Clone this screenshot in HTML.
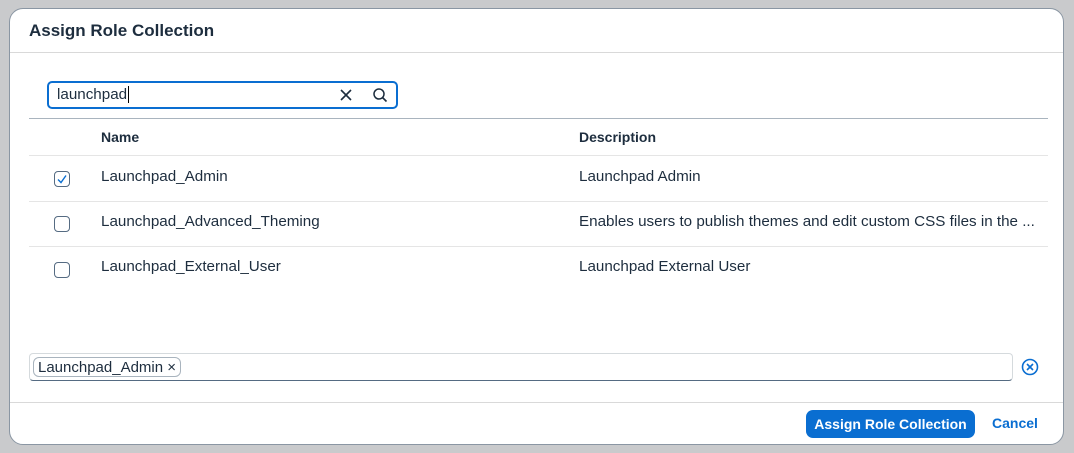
<!DOCTYPE html>
<html><head><style>
body{margin:0;width:1074px;height:453px;background:#c9cacc;font-family:"Liberation Sans",sans-serif;color:#1d2d3e;position:relative;overflow:hidden}
.dlg{position:absolute;left:9px;top:8px;width:1055px;height:437px;background:#fff;border-radius:14px;border:1px solid #8a96a3;box-sizing:border-box;overflow:hidden}
.abs{position:absolute}
.t{font-size:15.2px}
.b{font-size:14px;font-weight:bold}
.cb{position:absolute;left:44px;width:16px;height:16px;border:1px solid #556b82;border-radius:4px;box-sizing:border-box}
.line{position:absolute;left:19px;width:1019px;height:1px;background:#e5e5e5}
</style></head><body>
<div class="dlg">
<div class="abs" style="left:19px;top:12px;font-size:17px;font-weight:bold">Assign Role Collection</div>
<div class="abs" style="left:0;top:43px;width:100%;height:1px;background:#d9d9d9"></div>
<div class="abs" style="left:37px;top:72px;width:351px;height:28px;border:2px solid #0a6ed1;border-radius:5px;box-sizing:border-box"></div>
<div class="abs t" style="left:47px;top:77px">launchpad<span style="border-left:1px solid #000;margin-left:1px"></span></div>
<svg class="abs" style="left:329px;top:79px" width="14" height="14"><path d="M2 2L12 12M12 2L2 12" stroke="#1d2d3e" stroke-width="1.6"/></svg>
<svg class="abs" style="left:362px;top:78px" width="16" height="16"><circle cx="7" cy="7" r="5" fill="none" stroke="#1d2d3e" stroke-width="1.5"/><path d="M10.5 10.5L14.5 14.5" stroke="#1d2d3e" stroke-width="1.6"/></svg>
<div class="abs" style="left:19px;top:109px;width:1019px;height:1px;background:#a9b4be"></div>
<div class="abs b" style="left:91px;top:120px">Name</div>
<div class="abs b" style="left:569px;top:120px">Description</div>
<div class="line" style="top:146px"></div>
<div class="cb" style="top:162px"><svg width="14" height="14" style="position:absolute;left:0;top:0"><path d="M3 7.5L6 10.5L11 3.5" fill="none" stroke="#0a6ed1" stroke-width="1.4"/></svg></div>
<div class="abs t" style="left:91px;top:159px">Launchpad_Admin</div>
<div class="abs t" style="left:569px;top:159px">Launchpad Admin</div>
<div class="line" style="top:192px"></div>
<div class="cb" style="top:207px"></div>
<div class="abs t" style="left:91px;top:204px">Launchpad_Advanced_Theming</div>
<div class="abs t" style="left:569px;top:204px">Enables users to publish themes and edit custom CSS files in the ...</div>
<div class="line" style="top:237px"></div>
<div class="cb" style="top:253px"></div>
<div class="abs t" style="left:91px;top:249px">Launchpad_External_User</div>
<div class="abs t" style="left:569px;top:249px">Launchpad External User</div>
<div class="abs" style="left:19px;top:344px;width:984px;height:28px;border:1px solid #d5dadd;border-bottom:1px solid #556b82;border-radius:4px;box-sizing:border-box"></div>
<div class="abs" style="left:23px;top:348px;height:20px;border:1px solid #a9b4be;border-radius:6px;padding:0 4px;font-size:15px;line-height:19px;box-sizing:border-box;background:#fff">Launchpad_Admin ×</div>
<svg class="abs" style="left:1011px;top:349px" width="18" height="18"><circle cx="9" cy="9" r="7.5" fill="none" stroke="#0a6ed1" stroke-width="1.6"/><path d="M6 6L12 12M12 6L6 12" stroke="#0a6ed1" stroke-width="1.6"/></svg>
<div class="abs" style="left:0;top:393px;width:100%;height:1px;background:#d9d9d9"></div>
<div class="abs" style="left:796px;top:401px;width:169px;height:28px;background:#0a6ed1;border-radius:7px;color:#fff;font-size:14px;font-weight:bold;text-align:center;line-height:28px">Assign Role Collection</div>
<div class="abs" style="left:982px;top:406px;color:#0a6ed1;font-size:14px;font-weight:bold">Cancel</div>
</div>
</body></html>
